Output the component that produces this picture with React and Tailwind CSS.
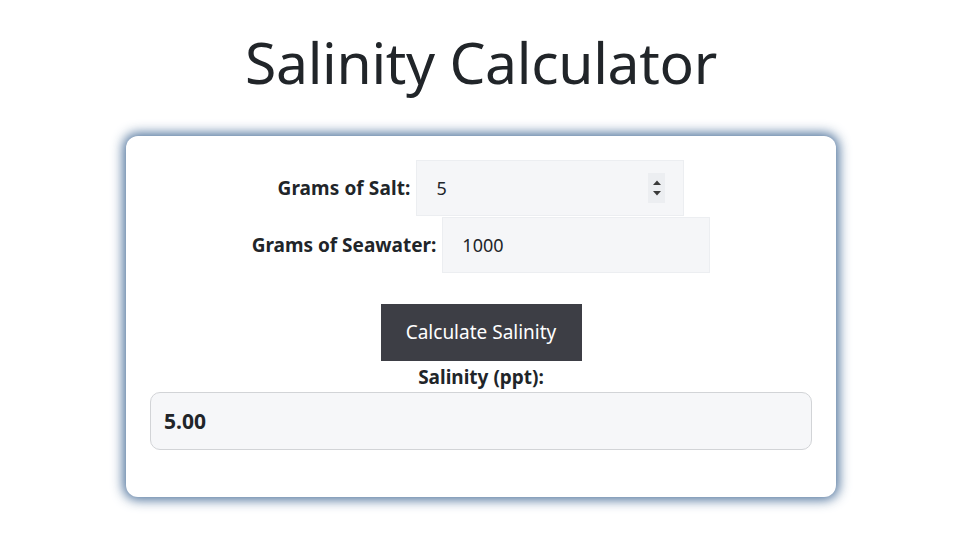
import React, { useState } from 'react';

function Spinner() {
    return (
        <div className="flex flex-col items-center justify-center w-[17px] h-[30px] bg-[#eceef1]">
            <svg width="10" height="22" viewBox="0 0 10 22">
                <path d="M1 8 L5 3.5 L9 8 Z" fill="#3a3a3a" />
                <path d="M1 14 L5 18.5 L9 14 Z" fill="#3a3a3a" />
            </svg>
        </div>
    );
}

export default function App() {
    const [salt, setSalt] = useState('5');
    const [water, setWater] = useState('1000');
    const [result, setResult] = useState('5.00');

    const calc = () => {
        const s = parseFloat(salt);
        const w = parseFloat(water);
        if (w > 0) setResult(((s / w) * 1000).toFixed(2));
    };

    return (
        <div className="min-h-[560px] bg-white text-[#212529] font-['Noto_Sans','Open_Sans',sans-serif] pt-[22px] pl-[8px]">
            <h1 className="text-center text-[57px] leading-[80px] font-normal tracking-[-0.3px]">Salinity Calculator</h1>

            <div className="mx-auto mt-[34px] w-[710px] bg-white rounded-[12px] shadow-[0_0_12px_3px_rgba(60,100,145,0.9)] px-[24px] pt-[24px] pb-[47px]">
                {/* inputs */}
                <div className="flex justify-center items-center">
                    <label className="text-[19px] font-bold mr-[6px] tracking-[0.1px]">Grams of Salt:</label>
                    <div className="flex items-center w-[268px] h-[56px] bg-[#f5f6f8] border border-[#eceef1] pl-[19px] pr-[18px]">
                        <input
                            value={salt}
                            onChange={(e) => setSalt(e.target.value)}
                            className="flex-1 min-w-0 bg-transparent outline-none text-[18px] text-[#212529]"
                        />
                        <Spinner />
                    </div>
                </div>
                <div className="flex justify-center items-center mt-[1px]">
                    <label className="text-[19px] font-bold mr-[6px]">Grams of Seawater:</label>
                    <div className="flex items-center w-[268px] h-[56px] bg-[#f5f6f8] border border-[#eceef1] pl-[19px]">
                        <input
                            value={water}
                            onChange={(e) => setWater(e.target.value)}
                            className="flex-1 min-w-0 bg-transparent outline-none text-[18px] text-[#212529]"
                        />
                    </div>
                </div>

                {/* button */}
                <div className="flex justify-center mt-[31px]">
                    <button
                        onClick={calc}
                        className="w-[201px] h-[57px] bg-[#3d3e45] text-white text-[19px] hover:bg-[#2f3036]"
                    >
                        Calculate Salinity
                    </button>
                </div>

                {/* result */}
                <p className="text-center text-[19px] font-bold leading-[30px] pt-[1px]">Salinity (ppt):</p>
                <div className="h-[58px] flex items-center px-[13px] pt-[2px] bg-[#f6f7f9] border border-[#d2d4d7] rounded-[10px] text-[21px] font-bold">
                    {result}
                </div>
            </div>
        </div>
    );
}
